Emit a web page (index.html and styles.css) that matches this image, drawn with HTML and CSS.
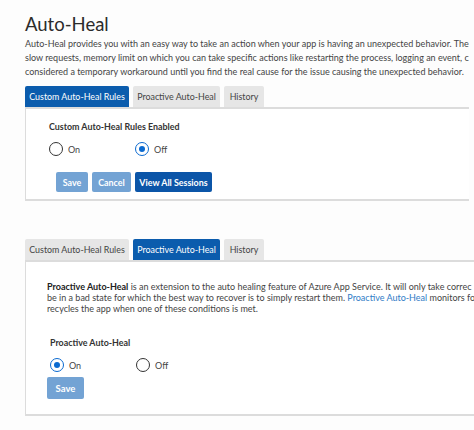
FILE: index.html
```html
<!DOCTYPE html>
<html>
<head>
<meta charset="utf-8">
<link rel="stylesheet" href="styles.css">
</head>
<body>
<div class="page">
  <h1 class="title">Auto-Heal</h1>
  <div class="desc">
    <div class="line">Auto-Heal provides you with an easy way to take an action when your app is having an unexpected behavior. The</div>
    <div class="line">slow requests, memory limit on which you can take specific actions like restarting the process, logging an event, c</div>
    <div class="line">considered a temporary workaround until you find the real cause for the issue causing the unexpected behavior.</div>
  </div>

  <div class="tabset first">
    <div class="tabs">
      <div class="tab active t1">Custom Auto-Heal Rules</div>
      <div class="tab t2">Proactive Auto-Heal</div>
      <div class="tab t3">History</div>
    </div>
    <div class="panel p1">
      <div class="label l1">Custom Auto-Heal Rules Enabled</div>
      <div class="radios r1">
        <div class="radio"><span class="circle"></span><span>On</span></div>
        <div class="radio"><span class="circle checked"></span><span>Off</span></div>
      </div>
      <div class="buttons">
        <div class="btn disabled bsave">Save</div>
        <div class="btn disabled bcancel">Cancel</div>
        <div class="btn primary bview">View All Sessions</div>
      </div>
    </div>
  </div>

  <div class="tabset second">
    <div class="tabs">
      <div class="tab t1">Custom Auto-Heal Rules</div>
      <div class="tab active t2">Proactive Auto-Heal</div>
      <div class="tab t3">History</div>
    </div>
    <div class="panel p2">
      <div class="para">
        <div class="line"><b>Proactive Auto-Heal</b> is an extension to the auto healing feature of Azure App Service. It will only take correc</div>
        <div class="line">be in a bad state for which the best way to recover is to simply restart them. <span class="link">Proactive Auto-Heal</span> monitors fo</div>
        <div class="line">recycles the app when one of these conditions is met.</div>
      </div>
      <div class="label l2">Proactive Auto-Heal</div>
      <div class="radios r2">
        <div class="radio"><span class="circle checked"></span><span>On</span></div>
        <div class="radio"><span class="circle"></span><span>Off</span></div>
      </div>
      <div class="btn disabled bsave2">Save</div>
    </div>
  </div>
</div>
</body>
</html>
```
FILE: styles.css
```css
html, body {
  margin: 0;
  padding: 0;
  background: #fdfdfd;
  overflow: hidden;
}
body {
  width: 474px;
  height: 430px;
  font-family: "Lato", "Open Sans", sans-serif;
  color: #333;
}
.page {
  padding: 11px 0 0 25px;
}
.title {
  margin: 0;
  font-weight: 400;
  font-size: 18.5px;
  line-height: 26px;
  color: #2b2b2b;
}
.desc {
  font-size: 9px;
  line-height: 14px;
  color: #444;
}
.line {
  white-space: nowrap;
}
.tabset.first {
  margin-top: 7px;
  width: 444px;
}
.tabset.second {
  margin-top: 38px;
  width: 460px;
}
.tabs {
  display: flex;
  gap: 4px;
  height: 21px;
}
.tab {
  display: flex;
  align-items: center;
  justify-content: center;
  white-space: nowrap;
  background: #e6e6e6;
  color: #444;
  font-size: 8.9px;
  border-radius: 2px 2px 0 0;
}
.tab.active {
  background: #0b5cad;
  color: #fff;
}
.t1 { width: 104px; }
.t2 { width: 87px; }
.t3 { width: 40px; }
.panel {
  background: #fff;
  border-top: 2px solid #dcdcdc;
  border-left: 1px solid #dcdcdc;
  border-bottom: 2px solid #dcdcdc;
}
.p1 {
  height: 90px;
  padding-left: 23px;
}
.p2 {
  height: 152px;
  padding-left: 21px;
}
.label {
  font-size: 8.9px;
  font-weight: 700;
  color: #333;
  white-space: nowrap;
}
.l1 { padding-top: 12px; line-height: 12px; }
.radios {
  display: flex;
  align-items: center;
  font-size: 9px;
  color: #444;
}
.r1 { margin-top: 9px; }
.radio {
  display: flex;
  align-items: center;
  gap: 5px;
  width: 86px;
}
.circle {
  box-sizing: border-box;
  width: 14px;
  height: 14px;
  border: 1px solid #333;
  border-radius: 50%;
  background: #fff;
  position: relative;
}
.circle.checked {
  border-color: #0b6ad0;
}
.circle.checked::after {
  content: "";
  position: absolute;
  left: 3px;
  top: 3px;
  width: 6px;
  height: 6px;
  border-radius: 50%;
  background: #0b6ad0;
}
.buttons {
  display: flex;
  gap: 4px;
  margin-top: 16px;
  margin-left: 7px;
}
.btn {
  display: flex;
  align-items: center;
  justify-content: center;
  white-space: nowrap;
  height: 20px;
  font-size: 8.9px;
  font-weight: 700;
  color: #fff;
  border-radius: 2px;
}
.btn.disabled { background: #73a3d4; }
.btn.primary { background: #0b55a8; }
.bsave { width: 32px; }
.bcancel { width: 39px; }
.bview { width: 77px; }
.para {
  padding-top: 19px;
  font-size: 9px;
  line-height: 11px;
  color: #444;
}
.para b { color: #222; }
.link { color: #2f7cc6; }
.l2 { margin-top: 23px; margin-left: 3px; line-height: 12px; }
.r2 { margin-top: 9px; margin-left: 3px; }
.bsave2 {
  margin-top: 5px;
  width: 37px;
  height: 22px;
  font-size: 9.5px;
}
```
